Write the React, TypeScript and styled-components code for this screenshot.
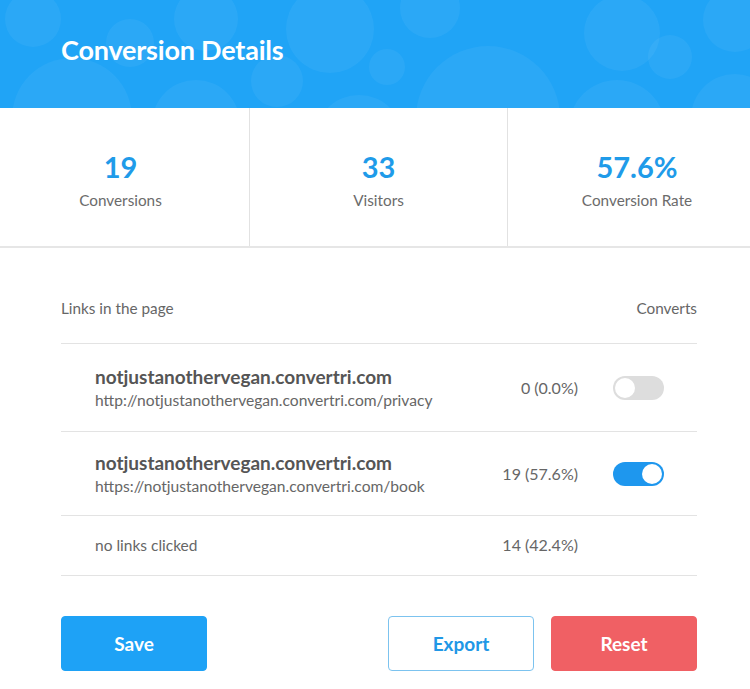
import styled, { createGlobalStyle } from "styled-components";

const GlobalStyle = createGlobalStyle`
  html, body {
    margin: 0;
    padding: 0;
    background: #ffffff;
  }
  * {
    box-sizing: border-box;
  }
`;

const Page = styled.div`
  width: 750px;
  height: 689px;
  overflow: hidden;
  background: #ffffff;
  font-family: Lato, "Liberation Sans", sans-serif;
  color: #666666;
`;

const Header = styled.div`
  position: relative;
  height: 108px;
  background: #20a4f6;
  overflow: hidden;
  padding: 33px 0 0 61px;
`;

const Bubbles = styled.svg`
  position: absolute;
  left: 0;
  top: 0;
`;

const Title = styled.h1`
  position: relative;
  margin: 0;
  font-size: 27px;
  line-height: 34px;
  font-weight: 700;
  color: #ffffff;
  letter-spacing: -0.2px;
`;

const Stats = styled.div`
  display: grid;
  grid-template-columns: 250px 258px 258px;
  height: 140px;
  border-bottom: 2px solid #e6e6e6;
`;

const Stat = styled.div<{ $last?: boolean; $first?: boolean }>`
  display: flex;
  flex-direction: column;
  align-items: center;
  padding-top: 42px;
  padding-right: ${(p) => (p.$first ? "8px" : "0")};
  border-right: ${(p) => (p.$last ? "none" : "1px solid #e2e2e2")};
`;

const StatValue = styled.div`
  font-size: 29px;
  line-height: 34px;
  font-weight: 700;
  color: #1f9be9;
`;

const StatLabel = styled.div`
  margin-top: 6px;
  font-size: 15.3px;
  line-height: 20px;
  color: #6b6b6b;
`;

const Content = styled.div`
  padding: 0 53px 0 61px;
`;

const TableHead = styled.div`
  display: flex;
  justify-content: space-between;
  padding: 49px 0 24px;
  font-size: 15.3px;
  line-height: 22px;
  color: #666666;
  border-bottom: 1px solid #e3e3e3;
`;

const Row = styled.div<{ $top: number; $bottom: number }>`
  display: grid;
  grid-template-columns: 1fr auto 84px;
  align-items: center;
  padding: ${(p) => p.$top}px 0 ${(p) => p.$bottom}px 34px;
  border-bottom: 1px solid #e3e3e3;
`;

const LinkInfo = styled.div`
  display: flex;
  flex-direction: column;
`;

const LinkTitle = styled.div`
  font-size: 19px;
  line-height: 23px;
  font-weight: 700;
  color: #555555;
  margin-bottom: 2px;
`;

const LinkUrl = styled.div`
  font-size: 15.6px;
  line-height: 20px;
  color: #666666;
`;

const Plain = styled.div`
  font-size: 15.5px;
  line-height: 20px;
  color: #666666;
`;

const Count = styled.div`
  padding-right: 35px;
  font-size: 16px;
  line-height: 20px;
  color: #666666;
  text-align: right;
`;

const Toggle = styled.div<{ $on: boolean }>`
  position: relative;
  width: 51px;
  height: 24px;
  border-radius: 12px;
  background: ${(p) => (p.$on ? "#1e97ee" : "#dddddd")};
  &::after {
    content: "";
    position: absolute;
    top: 2px;
    left: ${(p) => (p.$on ? "29px" : "2px")};
    width: 20px;
    height: 20px;
    border-radius: 50%;
    background: #ffffff;
  }
`;

const Actions = styled.div`
  display: flex;
  justify-content: space-between;
  margin-top: 40px;
`;

const Group = styled.div`
  display: flex;
  gap: 17px;
`;

const Button = styled.button<{ $variant: "primary" | "outline" | "danger" }>`
  width: 146px;
  height: 55px;
  border-radius: 4px;
  font-family: Lato, "Liberation Sans", sans-serif;
  font-size: 19px;
  font-weight: 700;
  cursor: pointer;
  border: 1px solid
    ${(p) =>
      p.$variant === "primary" ? "#1ea2f6" : p.$variant === "outline" ? "#7cc3ef" : "#f06064"};
  background: ${(p) =>
    p.$variant === "primary" ? "#1ea2f6" : p.$variant === "outline" ? "#ffffff" : "#f06064"};
  color: ${(p) => (p.$variant === "outline" ? "#2097e6" : "#ffffff")};
`;

const bubbles = [
  [33, 19, 28],
  [130, 43, 24],
  [206, 19, 32],
  [277, 81, 26],
  [330, 29, 44],
  [387, 67, 18],
  [430, 8, 30],
  [488, 118, 72],
  [622, 33, 38],
  [670, 57, 22],
  [735, 20, 32],
  [72, 118, 60],
  [196, 124, 44],
  [359, 139, 44],
  [617, 128, 48],
  [735, 118, 44],
];

interface ILink {
  title: string;
  url: string;
  count: string;
  on: boolean;
  top: number;
  bottom: number;
}

const links: ILink[] = [
  {
    title: "notjustanothervegan.convertri.com",
    url: "http://notjustanothervegan.convertri.com/privacy",
    count: "0 (0.0%)",
    on: false,
    top: 21,
    bottom: 21,
  },
  {
    title: "notjustanothervegan.convertri.com",
    url: "https://notjustanothervegan.convertri.com/book",
    count: "19 (57.6%)",
    on: true,
    top: 19,
    bottom: 19,
  },
];

function App() {
  return (
    <Page>
      <GlobalStyle />
      <Header>
        <Bubbles width="750" height="108" viewBox="0 0 750 108">
          {bubbles.map(([cx, cy, r], i) => (
            <circle key={i} cx={cx} cy={cy} r={r} fill="#ffffff" fillOpacity={0.05} />
          ))}
        </Bubbles>
        <Title>Conversion Details</Title>
      </Header>
      <Stats>
        <Stat $first>
          <StatValue>19</StatValue>
          <StatLabel>Conversions</StatLabel>
        </Stat>
        <Stat>
          <StatValue>33</StatValue>
          <StatLabel>Visitors</StatLabel>
        </Stat>
        <Stat $last>
          <StatValue>57.6%</StatValue>
          <StatLabel>Conversion Rate</StatLabel>
        </Stat>
      </Stats>
      <Content>
        <TableHead>
          <span>Links in the page</span>
          <span>Converts</span>
        </TableHead>
        {links.map((link) => (
          <Row key={link.url} $top={link.top} $bottom={link.bottom}>
            <LinkInfo>
              <LinkTitle>{link.title}</LinkTitle>
              <LinkUrl>{link.url}</LinkUrl>
            </LinkInfo>
            <Count>{link.count}</Count>
            <Toggle $on={link.on} />
          </Row>
        ))}
        <Row $top={19} $bottom={20}>
          <Plain>no links clicked</Plain>
          <Count>14 (42.4%)</Count>
          <span />
        </Row>
        <Actions>
          <Button $variant="primary">Save</Button>
          <Group>
            <Button $variant="outline">Export</Button>
            <Button $variant="danger">Reset</Button>
          </Group>
        </Actions>
      </Content>
    </Page>
  );
}

export default App;
